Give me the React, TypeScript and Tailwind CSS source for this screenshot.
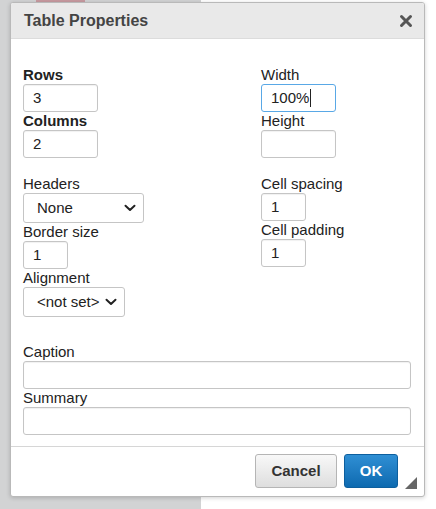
import React from "react";

const font = { fontFamily: '"Liberation Sans", Arial, sans-serif' };

function Label({ children, bold }: { children: React.ReactNode; bold?: boolean }) {
  return (
    <div className={`h-[18px] leading-[18px] text-[15px] text-[#222] ${bold ? "font-bold" : ""}`}>
      {children}
    </div>
  );
}

function TextBox({ value, width, focused, caret }: { value?: string; width: string; focused?: boolean; caret?: boolean }) {
  return (
    <div
      className={`${width} h-[28px] rounded-[3px] border bg-white pl-[9px] flex items-center text-[15px] text-[#222] ${
        focused ? "border-[#59a8e6]" : "border-[#c5c5c5] shadow-[inset_0_1px_1px_rgba(0,0,0,0.06)]"
      }`}
    >
      {value}
      {caret && <span className="ml-[1px] w-[1px] h-[18px] bg-[#222]" />}
    </div>
  );
}

function SelectBox({ value, width }: { value: string; width: string }) {
  return (
    <div className={`${width} h-[30px] rounded-[3px] border border-[#c5c5c5] bg-white flex items-center justify-between pl-[13px] pr-[7px] text-[15px] text-[#222]`}>
      <span>{value}</span>
      <svg width="12" height="8" viewBox="0 0 12 8" fill="none">
        <path d="M1.5 1.8 L6 6 L10.5 1.8" stroke="#222" strokeWidth="2" strokeLinecap="round" strokeLinejoin="round" />
      </svg>
    </div>
  );
}

export default function App() {
  return (
    <div className="relative w-[436px] h-[509px] overflow-hidden bg-white" style={font}>
      {/* page behind the dialog */}
      <div className="absolute left-0 top-0 w-[201px] h-full bg-[#d2d3d4]">
        <div className="ml-[36px] w-[49px] h-[3px] bg-[#c79aa0]" />
      </div>

      <div className="absolute left-[10px] top-[2px] w-[415px] h-[495px] flex flex-col rounded-[3px] border border-[#b9b9b9] bg-white shadow-[0_1px_4px_rgba(0,0,0,0.18)] overflow-hidden">
        <div className="h-[36px] shrink-0 bg-[#e9e9e9] border-b border-[#dcdcdc] flex items-center justify-between pl-[13px] pr-[11px]">
          <span className="text-[16px] font-bold text-[#444]">Table Properties</span>
          <svg width="14" height="14" viewBox="0 0 14 14">
            <path d="M2.5 2.5 L11.5 11.5 M11.5 2.5 L2.5 11.5" stroke="#555" strokeWidth="3" strokeLinecap="round" />
          </svg>
        </div>

        <div className="flex-1 pl-[12px] pr-[13px] pt-[27px]">
          <div className="grid grid-cols-[238px_1fr]">
            <div className="flex flex-col">
              <Label bold>Rows</Label>
              <TextBox value="3" width="w-[75px]" />
              <Label bold>Columns</Label>
              <TextBox value="2" width="w-[75px]" />
              <div className="h-[17px]" />
              <Label>Headers</Label>
              <SelectBox value="None" width="w-[121px]" />
              <Label>Border size</Label>
              <TextBox value="1" width="w-[45px]" />
              <Label>Alignment</Label>
              <SelectBox value="<not set>" width="w-[102px]" />
            </div>
            <div className="flex flex-col">
              <Label>Width</Label>
              <TextBox value="100%" width="w-[75px]" focused caret />
              <Label>Height</Label>
              <TextBox width="w-[75px]" />
              <div className="h-[17px]" />
              <Label>Cell spacing</Label>
              <TextBox value="1" width="w-[45px]" />
              <Label>Cell padding</Label>
              <TextBox value="1" width="w-[45px]" />
            </div>
          </div>

          <div className="mt-[26px] flex flex-col">
            <Label>Caption</Label>
            <TextBox width="w-full" />
            <Label>Summary</Label>
            <TextBox width="w-full" />
          </div>
        </div>

        <div className="relative h-[50px] shrink-0 border-t border-[#d6d6d6] flex items-start justify-end gap-[7px] pt-[7px] pr-[26px]">
          <div className="w-[82px] h-[34px] rounded-[3px] border border-[#b5b5b5] bg-gradient-to-b from-[#f8f8f8] to-[#dedede] flex items-center justify-center text-[15px] font-bold text-[#333]">
            Cancel
          </div>
          <div className="w-[54px] h-[34px] rounded-[3px] border border-[#0d5f9e] bg-gradient-to-b from-[#2f8fd4] to-[#0c6ab0] flex items-center justify-center text-[15px] font-bold text-white">
            OK
          </div>
          <svg className="absolute right-[7px] bottom-[7px]" width="12" height="12" viewBox="0 0 12 12">
            <path d="M12 0 L12 12 L0 12 Z" fill="#666" />
          </svg>
        </div>
      </div>
    </div>
  );
}
